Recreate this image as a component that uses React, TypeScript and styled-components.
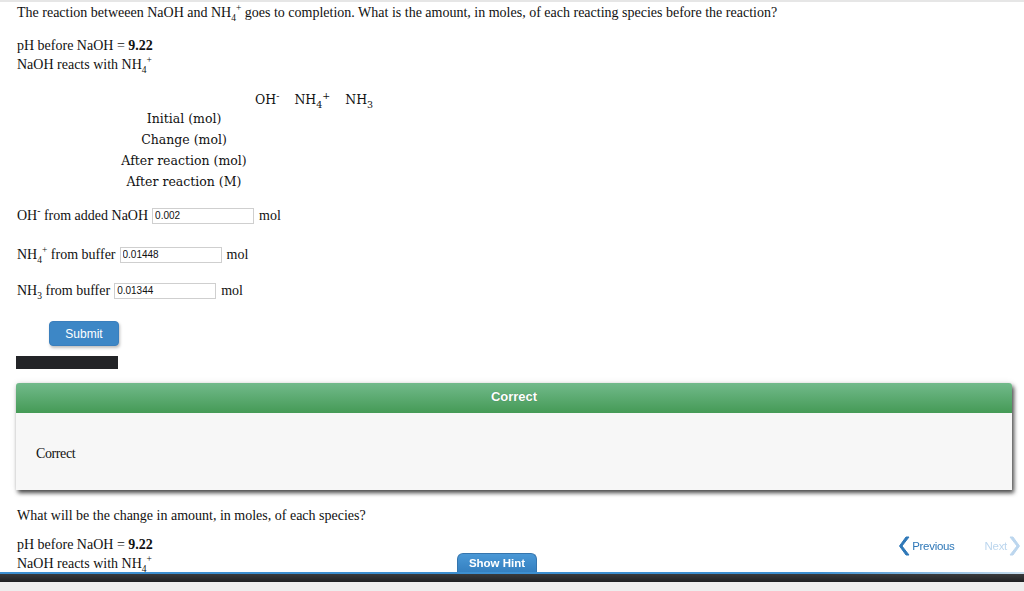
import React from "react";
import styled, { createGlobalStyle } from "styled-components";

const Global = createGlobalStyle`
  html, body { margin: 0; padding: 0; background: #fff; }
  body { font-family: "Liberation Serif", "Times New Roman", serif; font-size: 14px; color: #111; overflow: hidden; }
  sub, sup { font-size: 9.5px; line-height: 0; }
`;

const Page = styled.div`
  border-top: 2px solid #e6e6e6;
  padding: 1px 12px 0 17px;
  height: 589px;
  box-sizing: border-box;
  overflow: hidden;
`;

const Para = styled.p<{ $mt?: number }>`
  margin: ${(p) => p.$mt ?? 0}px 0 0 0;
  line-height: 19px;
  height: 19px;
  white-space: nowrap;
`;

const Table = styled.table`
  margin: 17px 0 0 96px;
  border-collapse: collapse;
  font-family: "DejaVu Serif", "Liberation Serif", serif;
  font-size: 12.5px;
  td, th { padding: 0; font-weight: normal; }
`;

const HeadCell = styled.th`
  height: 17px;
  text-align: left;
  padding-right: 15px !important;
`;

const LabelCell = styled.td`
  text-align: center;
  width: 142px;
  height: 21px;
`;

const FieldRow = styled.div<{ $mt: number }>`
  display: flex;
  align-items: center;
  gap: 4px;
  margin-top: ${(p) => p.$mt}px;
  height: 19px;
  white-space: nowrap;
`;

const Input = styled.input`
  width: 96px;
  height: 14px;
  border: 1px solid #cfcfcf;
  padding: 0 2px;
  font-family: "Liberation Sans", Arial, sans-serif;
  font-size: 10px;
  color: #111;
  margin: 0;
`;

const Unit = styled.span`
  margin-left: 1px;
`;

const SubmitButton = styled.button`
  display: block;
  margin: 21px 0 0 32px;
  width: 70px;
  height: 25px;
  border: 1px solid #3a7fbd;
  border-radius: 4px;
  background: #3d87c6;
  color: #fff;
  font-family: "Liberation Sans", Arial, sans-serif;
  font-size: 12px;
  box-shadow: 1px 2px 3px rgba(0, 0, 0, 0.25);
`;

const BlackBar = styled.div`
  margin: 10px 0 0 -1px;
  width: 102px;
  height: 13px;
  background: #232427;
`;

const Panel = styled.div`
  margin: 14px 0 0 -1px;
  width: 996px;
  border-radius: 3px 3px 0 0;
  background: #f7f7f7;
  box-shadow: 2px 3px 4px rgba(0, 0, 0, 0.7), 0 0 6px rgba(0, 0, 0, 0.1);
  overflow: hidden;
`;

const PanelHead = styled.div`
  height: 30px;
  background: linear-gradient(#72ba8b, #459a56);
  color: #fff;
  font-family: "Liberation Sans", Arial, sans-serif;
  font-weight: bold;
  font-size: 13px;
  text-align: center;
  line-height: 28px;
  text-shadow: 0 0 1px rgba(0, 0, 0, 0.3);
`;

const PanelBody = styled.div`
  height: 77px;
  padding: 4px 0 0 20px;
  box-sizing: border-box;
  display: flex;
  align-items: center;
  font-size: 14px;
  letter-spacing: -0.4px;
`;

const Footer = styled.div`
  position: fixed;
  left: 0;
  right: 0;
  bottom: 0;
  height: 56px;
  display: flex;
  flex-direction: column;
  justify-content: flex-end;
`;

const FooterTop = styled.div`
  position: relative;
  flex: 1;
`;

const HintTab = styled.button`
  position: absolute;
  left: 457px;
  bottom: 0;
  width: 80px;
  height: 19px;
  border: 1px solid #3575ad;
  border-bottom: none;
  border-radius: 6px 6px 0 0;
  background: linear-gradient(#4a98d6, #3580c0);
  color: #fff;
  font-family: "Liberation Sans", Arial, sans-serif;
  font-weight: bold;
  font-size: 11.5px;
  padding: 0;
  line-height: 18px;
`;

const Nav = styled.div`
  position: absolute;
  right: 4px;
  top: 1px;
  display: flex;
  align-items: center;
  gap: 30px;
  font-family: "Liberation Sans", Arial, sans-serif;
  font-size: 11.5px;
`;

const NavLink = styled.span<{ $disabled?: boolean }>`
  display: flex;
  align-items: center;
  gap: 1px;
  color: ${(p) => (p.$disabled ? "#bcd6ee" : "#2f78b8")};
  letter-spacing: -0.3px;
`;

const BlueLine = styled.div`
  height: 2px;
  background: linear-gradient(90deg, #3d8fd0 80%, #c7dcec);
`;

const DarkBar = styled.div`
  height: 8px;
  background: linear-gradient(#3a3b3d, #1f2022);
`;

const GreyStrip = styled.div`
  height: 9px;
  background: #eeeeee;
`;

const Chevron = ({ dir, color }: { dir: "l" | "r"; color: string }) => (
  <svg width="12" height="20" viewBox="0 0 12 20">
    {dir === "l" ? (
      <path d="M10 1 L3 10 L10 19 L7 19 L0.5 10 L7 1 Z" fill={color} stroke={color} strokeWidth="1" strokeLinejoin="round" />
    ) : (
      <path d="M2 1 L9 10 L2 19 L5 19 L11.5 10 L5 1 Z" fill={color} stroke={color} strokeWidth="1" strokeLinejoin="round" />
    )}
  </svg>
);

export default function App() {
  return (
    <>
      <Global />
      <Page>
        <Para>
          The reaction betweeen NaOH and NH<sub>4</sub>
          <sup>+</sup> goes to completion. What is the amount, in moles, of each reacting species before the reaction?
        </Para>
        <Para $mt={14}>
          pH before NaOH = <b>9.22</b>
        </Para>
        <Para>
          NaOH reacts with NH<sub>4</sub>
          <sup>+</sup>
        </Para>
        <Table>
          <thead>
            <tr>
              <HeadCell />
              <HeadCell>
                OH<sup>-</sup>
              </HeadCell>
              <HeadCell>
                NH<sub>4</sub>
                <sup>+</sup>
              </HeadCell>
              <HeadCell>
                NH<sub>3</sub>
              </HeadCell>
            </tr>
          </thead>
          <tbody>
            {["Initial (mol)", "Change (mol)", "After reaction (mol)", "After reaction (M)"].map((r) => (
              <tr key={r}>
                <LabelCell>{r}</LabelCell>
                <td />
                <td />
                <td />
              </tr>
            ))}
          </tbody>
        </Table>
        <FieldRow $mt={14}>
          <span>
            OH<sup>-</sup> from added NaOH
          </span>
          <Input defaultValue="0.002" />
          <Unit>mol</Unit>
        </FieldRow>
        <FieldRow $mt={20}>
          <span>
            NH<sub>4</sub>
            <sup>+</sup> from buffer
          </span>
          <Input defaultValue="0.01448" />
          <Unit>mol</Unit>
        </FieldRow>
        <FieldRow $mt={17}>
          <span>
            NH<sub>3</sub> from buffer
          </span>
          <Input defaultValue="0.01344" />
          <Unit>mol</Unit>
        </FieldRow>
        <SubmitButton>Submit</SubmitButton>
        <BlackBar />
        <Panel>
          <PanelHead>Correct</PanelHead>
          <PanelBody>Correct</PanelBody>
        </Panel>
        <Para $mt={16}>What will be the change in amount, in moles, of each species?</Para>
        <Para $mt={10}>
          pH before NaOH = <b>9.22</b>
        </Para>
        <Para>
          NaOH reacts with NH<sub>4</sub>
          <sup>+</sup>
        </Para>
      </Page>
      <Footer>
        <FooterTop>
          <Nav>
            <NavLink>
              <Chevron dir="l" color="#2f78b8" />
              Previous
            </NavLink>
            <NavLink $disabled>
              Next
              <Chevron dir="r" color="#bcd6ee" />
            </NavLink>
          </Nav>
          <HintTab>Show Hint</HintTab>
        </FooterTop>
        <BlueLine />
        <DarkBar />
        <GreyStrip />
      </Footer>
    </>
  );
}
